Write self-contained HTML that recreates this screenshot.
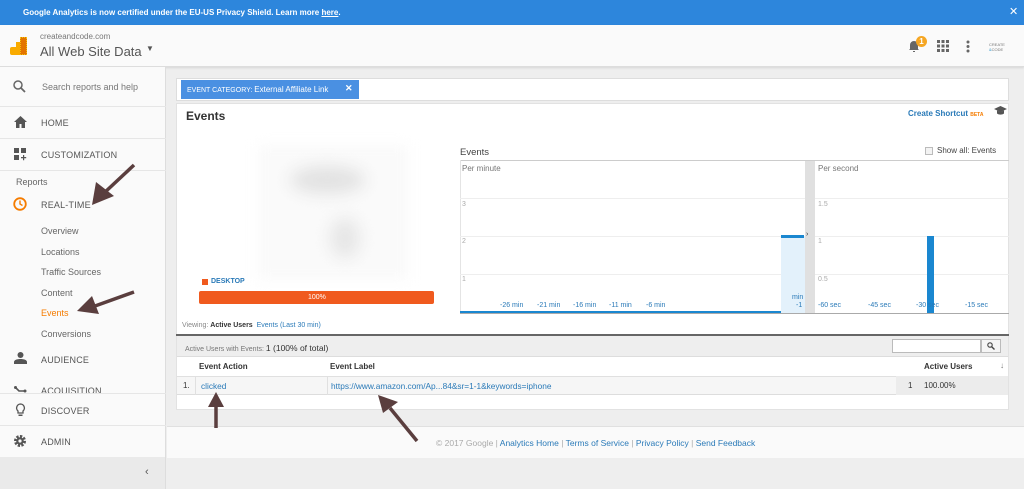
<!DOCTYPE html>
<html><head><meta charset="utf-8"><style>
*{margin:0;padding:0;box-sizing:border-box}
body{width:1024px;height:489px;overflow:hidden;font-family:"Liberation Sans",sans-serif;background:#eeeeee;position:relative;color:#444}
.a{position:absolute}
.t{position:absolute;white-space:nowrap}
.nav{font-size:9px;color:#555;letter-spacing:.2px}
.sub{font-size:9px;color:#666}
.blue{color:#2a7ab8}
.hl{position:absolute;height:1px;background:#e6e6e6}
.ax{font-size:7px;color:#2a7ab8;position:absolute;white-space:nowrap}
.yl{font-size:7px;color:#aaa;position:absolute}
</style></head><body>
<!-- banner -->
<div class="a" style="left:0;top:0;width:1024px;height:25px;background:#2d86dc"></div>
<div class="t" style="left:23px;top:8px;font-size:8px;font-weight:bold;color:#fff">Google Analytics is now certified under the EU-US Privacy Shield. Learn more <u>here</u>.</div>
<div class="t" style="left:1009px;top:5px;font-size:11px;color:#fff">✕</div>
<!-- header -->
<div class="a" style="left:0;top:25px;width:1024px;height:42px;background:#fafafa;border-bottom:1px solid #ddd;box-shadow:0 1px 2px rgba(0,0,0,.1)"></div>
<div class="a" style="left:10px;top:47px;width:8px;height:8px;background:#f9ab00;border-radius:2px"></div>
<div class="a" style="left:16px;top:42px;width:6px;height:13px;background:#f9ab00"></div>
<div class="a" style="left:20px;top:37px;width:7px;height:18px;background:#e37400;border:1px dotted #f4c20d"></div>
<div class="t" style="left:40px;top:32px;font-size:8px;color:#777">createandcode.com</div>
<div class="t" style="left:40px;top:44px;font-size:13px;color:#555">All Web Site Data</div>
<div class="t" style="left:146px;top:44px;font-size:8px;color:#555">▼</div>
<svg class="a" style="left:906px;top:38px" width="16" height="16" viewBox="0 0 16 16"><path d="M4 11V7a4 4 0 018 0v4l1 1H3z M7 13h2v1H7z" fill="#666"/></svg>
<div class="a" style="left:916px;top:36px;width:11px;height:11px;border-radius:50%;background:#f5a623;color:#fff;font-size:8px;text-align:center;line-height:11px;font-weight:bold">1</div>
<svg class="a" style="left:937px;top:40px" width="12" height="12"><g fill="#666"><rect x="0" y="0" width="3" height="3"/><rect x="4.5" y="0" width="3" height="3"/><rect x="9" y="0" width="3" height="3"/><rect x="0" y="4.5" width="3" height="3"/><rect x="4.5" y="4.5" width="3" height="3"/><rect x="9" y="4.5" width="3" height="3"/><rect x="0" y="9" width="3" height="3"/><rect x="4.5" y="9" width="3" height="3"/><rect x="9" y="9" width="3" height="3"/></g></svg>
<svg class="a" style="left:966px;top:40px" width="4" height="13"><g fill="#666"><circle cx="2" cy="2" r="1.5"/><circle cx="2" cy="6.5" r="1.5"/><circle cx="2" cy="11" r="1.5"/></g></svg>
<div class="t" style="left:989px;top:42px;font-size:4px;color:#777;line-height:5px">CREATE<br><span style="color:#39c">&amp;</span>CODE</div>
<!-- sidebar -->
<div class="a" style="left:0;top:67px;width:166px;height:390px;background:#fafafa;border-right:1px solid #ddd"></div>
<div class="hl" style="left:0;top:106px;width:166px"></div>
<div class="hl" style="left:0;top:138px;width:166px"></div>
<div class="hl" style="left:0;top:170px;width:166px"></div>
<div class="hl" style="left:0;top:393px;width:166px"></div>
<div class="hl" style="left:0;top:425px;width:166px"></div>
<svg class="a" style="left:13px;top:80px" width="13" height="13"><circle cx="5" cy="5" r="4" fill="none" stroke="#666" stroke-width="1.5"/><path d="M8 8l4 4" stroke="#666" stroke-width="1.8"/></svg>
<div class="t sub" style="left:42px;top:82px;color:#777">Search reports and help</div>
<svg class="a" style="left:14px;top:116px" width="13" height="12"><path d="M6.5 0L0 6h2v6h3.5V8h2v4H11V6h2z" fill="#555"/></svg>
<div class="t nav" style="left:41px;top:118px">HOME</div>
<svg class="a" style="left:14px;top:148px" width="13" height="13"><g fill="#555"><rect width="5" height="5"/><rect x="7" width="5" height="5"/><rect y="7" width="5" height="5"/><path d="M9 7h1.2v2h2v1.2h-2v2H9v-2H7V9h2z"/></g></svg>
<div class="t nav" style="left:41px;top:150px">CUSTOMIZATION</div>
<div class="t sub" style="left:16px;top:177px">Reports</div>
<svg class="a" style="left:13px;top:197px" width="14" height="14"><circle cx="7" cy="7" r="5.8" fill="none" stroke="#f57c00" stroke-width="1.8"/><path d="M7 3.5V7l2.5 1.5" fill="none" stroke="#f57c00" stroke-width="1.4"/></svg>
<div class="t nav" style="left:41px;top:200px">REAL-TIME</div>
<div class="t sub" style="left:41px;top:226px">Overview</div>
<div class="t sub" style="left:41px;top:247px">Locations</div>
<div class="t sub" style="left:41px;top:267px">Traffic Sources</div>
<div class="t sub" style="left:41px;top:288px">Content</div>
<div class="t sub" style="left:41px;top:308px;color:#f57c00">Events</div>
<div class="t sub" style="left:41px;top:329px">Conversions</div>
<svg class="a" style="left:14px;top:352px" width="13" height="12"><circle cx="6.5" cy="3" r="3" fill="#555"/><path d="M0 12v-2c0-2 3-3 6.5-3s6.5 1 6.5 3v2z" fill="#555"/></svg>
<div class="t nav" style="left:41px;top:355px">AUDIENCE</div>
<svg class="a" style="left:14px;top:386px" width="13" height="7"><path d="M1 1l4 4h6" stroke="#555" stroke-width="1.6" fill="none"/><circle cx="1.5" cy="1.5" r="1.5" fill="#555"/><circle cx="11" cy="5" r="1.5" fill="#555"/></svg>
<div class="a" style="left:0;top:385px;width:165px;height:8px;overflow:hidden"><div class="t nav" style="left:41px;top:1px">ACQUISITION</div></div>
<svg class="a" style="left:15px;top:403px" width="11" height="14"><path d="M5.5 1a4 4 0 00-2.5 7v2h5V8a4 4 0 00-2.5-7z" fill="none" stroke="#555" stroke-width="1.3"/><rect x="3.5" y="11.5" width="4" height="1.5" fill="#555"/></svg>
<div class="t nav" style="left:41px;top:406px">DISCOVER</div>
<svg class="a" style="left:13px;top:434px" width="14" height="14" viewBox="0 0 14 14"><circle cx="7" cy="7" r="4.5" fill="none" stroke="#555" stroke-width="3" stroke-dasharray="2.2 1.3"/><circle cx="7" cy="7" r="3.8" fill="#555"/><circle cx="7" cy="7" r="1.6" fill="#fafafa"/></svg>
<div class="t nav" style="left:41px;top:437px">ADMIN</div>
<div class="a" style="left:0;top:457px;width:166px;height:32px;background:#eaeaea;border-right:1px solid #ddd"></div>
<div class="t" style="left:145px;top:466px;font-size:11px;color:#555">‹</div>
<!-- main panel -->
<div class="a" style="left:176px;top:78px;width:833px;height:23px;background:#fff;border:1px solid #ddd"></div>
<div class="a" style="left:181px;top:80px;width:178px;height:19px;background:#4a90e2"></div>
<div class="t" style="left:187px;top:85px;font-size:7px;color:#fff">EVENT CATEGORY: <span style="font-size:8px">External Affiliate Link</span></div>
<div class="t" style="left:345px;top:83px;font-size:9px;color:#fff;font-weight:bold">✕</div>
<div class="a" style="left:176px;top:103px;width:833px;height:307px;background:#fff;border:1px solid #e2e2e2"></div>
<div class="t" style="left:186px;top:109px;font-size:12px;font-weight:bold;color:#333">Events</div>
<div class="t" style="left:908px;top:109px;font-size:8px;font-weight:bold;color:#2a7ab8">Create Shortcut <span style="font-size:5px;color:#f57c00">BETA</span></div>
<svg class="a" style="left:994px;top:106px" width="13" height="9"><path d="M0 3L6.5 0 13 3 6.5 6z M3 4.5v3c2 1.5 5 1.5 7 0v-3L6.5 6z" fill="#555"/></svg>
<!-- blurred donut -->
<div class="a" style="left:258px;top:145px;width:150px;height:135px;background:#fafafa;filter:blur(6px)"></div>
<div class="a" style="left:290px;top:166px;width:75px;height:28px;background:#e2e2e2;border-radius:50%;filter:blur(8px)"></div>
<div class="a" style="left:330px;top:218px;width:30px;height:40px;background:#e6e6e6;border-radius:50%;filter:blur(8px)"></div>
<div class="a" style="left:202px;top:279px;width:6px;height:6px;background:#f05a1e"></div>
<div class="t" style="left:211px;top:278px;font-size:7px;font-weight:bold;color:#2a7ab8">DESKTOP</div>
<div class="a" style="left:199px;top:291px;width:235px;height:13px;background:#f05a1e;border-radius:2px"></div>
<div class="t" style="left:308px;top:294px;font-size:7px;color:#fff">100%</div>
<!-- chart -->
<div class="t" style="left:460px;top:147px;font-size:9.5px;color:#444">Events</div>
<div class="a" style="left:925px;top:147px;width:8px;height:8px;border:1px solid #bbb;background:#f3f3f3"></div>
<div class="t" style="left:937px;top:146px;font-size:8px;color:#444">Show all: Events</div>
<div class="a" style="left:460px;top:160px;width:549px;height:1px;background:#ccc"></div>
<div class="a" style="left:460px;top:160px;width:1px;height:153px;background:#e4e4e4"></div>
<div class="t" style="left:462px;top:164px;font-size:8px;color:#777">Per minute</div>
<div class="t" style="left:818px;top:164px;font-size:8px;color:#777">Per second</div>
<div class="a" style="left:805px;top:161px;width:10px;height:152px;background:#e0e0e0"></div>
<div class="t" style="left:806px;top:231px;font-size:7px;color:#333">›</div>
<div class="hl" style="left:460px;top:198px;width:345px;background:#eee"></div>
<div class="hl" style="left:460px;top:236px;width:345px;background:#eee"></div>
<div class="hl" style="left:460px;top:274px;width:345px;background:#eee"></div>
<div class="hl" style="left:815px;top:198px;width:194px;background:#eee"></div>
<div class="hl" style="left:815px;top:236px;width:194px;background:#eee"></div>
<div class="hl" style="left:815px;top:274px;width:194px;background:#eee"></div>
<div class="yl" style="left:462px;top:201px">3</div>
<div class="yl" style="left:462px;top:238px">2</div>
<div class="yl" style="left:462px;top:276px">1</div>
<div class="yl" style="left:818px;top:201px">1.5</div>
<div class="yl" style="left:818px;top:238px">1</div>
<div class="yl" style="left:818px;top:276px">0.5</div>
<div class="a" style="left:781px;top:236px;width:24px;height:77px;background:#e3f1fb"></div>
<div class="a" style="left:781px;top:235px;width:23px;height:3px;background:#1a87d0"></div>
<div class="a" style="left:460px;top:311px;width:321px;height:2px;background:#1a87d0"></div>
<div class="a" style="left:927px;top:236px;width:7px;height:77px;background:#1a87d0"></div>
<div class="a" style="left:460px;top:313px;width:549px;height:1px;background:#aaa"></div>
<div class="ax" style="left:500px;top:302px">-26 min</div>
<div class="ax" style="left:537px;top:302px">-21 min</div>
<div class="ax" style="left:573px;top:302px">-16 min</div>
<div class="ax" style="left:609px;top:302px">-11 min</div>
<div class="ax" style="left:646px;top:302px">-6 min</div>
<div class="ax" style="left:792px;top:294px">min</div>
<div class="ax" style="left:796px;top:302px">-1</div>
<div class="ax" style="left:818px;top:302px">-60 sec</div>
<div class="ax" style="left:868px;top:302px">-45 sec</div>
<div class="ax" style="left:916px;top:302px">-30 sec</div>
<div class="ax" style="left:965px;top:302px">-15 sec</div>
<!-- viewing -->
<div class="t" style="left:182px;top:322px;font-size:7px;color:#888">Viewing: <b style="color:#333">Active Users</b> &nbsp;<span class="blue">Events (Last 30 min)</span></div>
<div class="a" style="left:176px;top:334px;width:833px;height:2px;background:#666"></div>
<div class="a" style="left:177px;top:336px;width:831px;height:21px;background:#eeeeee;border-bottom:1px solid #ddd"></div>
<div class="t" style="left:185px;top:343px;font-size:7px;color:#777">Active Users with Events: <span style="font-size:8.5px;color:#333">1 (100% of total)</span></div>
<div class="a" style="left:892px;top:339px;width:89px;height:14px;background:#fff;border:1px solid #bbb"></div>
<div class="a" style="left:981px;top:339px;width:20px;height:14px;background:#f5f5f5;border:1px solid #bbb"></div>
<svg class="a" style="left:987px;top:342px" width="8" height="8"><circle cx="3" cy="3" r="2.2" fill="none" stroke="#444" stroke-width="1.1"/><path d="M4.7 4.7L7.5 7.5" stroke="#444" stroke-width="1.4"/></svg>
<div class="t" style="left:199px;top:362px;font-size:8px;font-weight:bold;color:#333">Event Action</div>
<div class="t" style="left:330px;top:362px;font-size:8px;font-weight:bold;color:#333">Event Label</div>
<div class="t" style="left:924px;top:362px;font-size:8px;font-weight:bold;color:#333">Active Users</div>
<div class="t" style="left:1000px;top:361px;font-size:8px;color:#777">↓</div>
<div class="a" style="left:177px;top:376px;width:831px;height:19px;background:#f6f6f6;border-top:1px solid #e0e0e0;border-bottom:1px solid #ddd"></div>
<div class="a" style="left:195px;top:376px;width:1px;height:19px;background:#e0e0e0"></div>
<div class="a" style="left:327px;top:376px;width:1px;height:19px;background:#e0e0e0"></div>
<div class="a" style="left:896px;top:376px;width:112px;height:19px;background:#ececec"></div>
<div class="t" style="left:183px;top:381px;font-size:8px;color:#333">1.</div>
<div class="t blue" style="left:201px;top:381px;font-size:8.3px">clicked</div>
<div class="t blue" style="left:331px;top:381px;font-size:8.3px">https://www.amazon.com/Ap...84&amp;sr=1-1&amp;keywords=iphone</div>
<div class="t" style="left:908px;top:381px;font-size:8px;color:#333">1</div>
<div class="t" style="left:924px;top:381px;font-size:8px;color:#333">100.00%</div>
<!-- footer -->
<div class="a" style="left:167px;top:426px;width:857px;height:32px;background:#fafafa;border-top:1px solid #e0e0e0"></div>
<div class="t" style="left:436px;top:438px;font-size:8.5px;color:#aaa">© 2017 Google | <span class="blue">Analytics Home</span> | <span class="blue">Terms of Service</span> | <span class="blue">Privacy Policy</span> | <span class="blue">Send Feedback</span></div>
<!-- arrows -->
<svg class="a" style="left:0;top:0" width="1024" height="489">
<g stroke="#5a3e3e" stroke-width="3.5" fill="#5a3e3e">
<line x1="134" y1="165" x2="103" y2="194"/><polygon points="92,205 96,182 114,196" stroke="none"/>
<line x1="134" y1="292" x2="95" y2="306"/><polygon points="77,311 92,296 99,314" stroke="none"/>
<line x1="216" y1="428" x2="216" y2="406"/><polygon points="216,392 208,407 224,407" stroke="none"/>
<line x1="417" y1="441" x2="390" y2="408"/><polygon points="378,395 383,413 398,402" stroke="none"/>
</g></svg>
</body></html>
